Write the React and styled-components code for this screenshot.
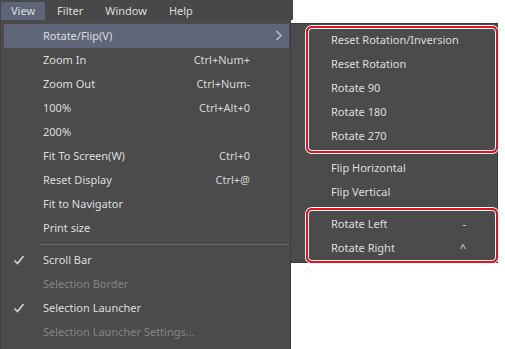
import styled, { createGlobalStyle, css } from "styled-components";

const GlobalStyle = createGlobalStyle`
  html, body {
    margin: 0;
    background: #ffffff;
  }
  body {
    font-family: "Noto Sans", "Open Sans", sans-serif;
    font-size: 11px;
  }
`;

const Screen = styled.div`
  position: relative;
  width: 505px;
  height: 349px;
  overflow: hidden;
  background: #ffffff;
`;

const MenuBar = styled.div`
  display: flex;
  align-items: flex-end;
  width: 293px;
  height: 20px;
  padding-left: 1px;
  box-sizing: border-box;
  background: #484848;
`;

const BarItem = styled.div`
  height: 18px;
  line-height: 18px;
  padding: 0 10px 0 10px;
  margin-right: 2px;
  color: #dcdcdc;
  border-radius: 2px 2px 0 0;
  background: ${(p) => (p.$open ? "#5e6578" : "transparent")};
`;

const Dropdown = styled.div`
  width: 291px;
  height: 329px;
  box-sizing: border-box;
  padding: 4px 1px 0 3px;
  background: #4b4b4b;
  border-left: 1px solid #404040;
  border-right: 1px solid #3c3c3c;
`;

const Row = styled.div`
  display: flex;
  align-items: center;
  box-sizing: border-box;
  height: 24px;
  padding: 0 ${(p) => (p.$sub ? "31px" : "39px")} 2px ${(p) => (p.$sub ? "40px" : "39px")};
  position: relative;
  color: ${(p) => (p.$disabled ? "#858585" : "#dedede")};
  ${(p) =>
    p.$active &&
    css`
      background: #5f6679;
      border-radius: 2px;
    `}
`;

const Label = styled.span`
  flex: 1;
  white-space: nowrap;
`;

const Shortcut = styled.span`
  white-space: nowrap;
  color: #d6d6d6;
`;

const Check = styled.svg`
  position: absolute;
  left: 9px;
  top: 7px;
`;

const Arrow = styled.svg`
  position: absolute;
  right: 6px;
  top: 6px;
`;

const Separator = styled.div`
  height: 8px;
  display: flex;
  align-items: center;
  padding-left: ${(p) => (p.$sub ? "16px" : "36px")};

  &::before {
    content: "";
    flex: 1;
    height: 1px;
    background: #6a6a6a;
  }
`;

const Submenu = styled.div`
  position: absolute;
  left: 290px;
  top: 23px;
  width: 208px;
  box-sizing: border-box;
  padding: 4px 0 2px 0;
  background: #4b4b4b;
  border: 1px solid #3c3c3c;
`;

const Callout = styled.div`
  position: relative;

  &::after {
    content: "";
    position: absolute;
    left: 15px;
    right: -1px;
    top: ${(p) => p.$top}px;
    bottom: ${(p) => p.$bottom}px;
    border: 2px solid #e8101a;
    border-radius: 6px;
    box-shadow: 0 0 0 1px #ffffff, inset 0 0 0 1px #ffffff;
    pointer-events: none;
  }
`;

const mainItems = [
  { label: "Rotate/Flip(V)", active: true, arrow: true },
  { label: "Zoom In", key: "Ctrl+Num+" },
  { label: "Zoom Out", key: "Ctrl+Num-" },
  { label: "100%", key: "Ctrl+Alt+0" },
  { label: "200%" },
  { label: "Fit To Screen(W)", key: "Ctrl+0" },
  { label: "Reset Display", key: "Ctrl+@" },
  { label: "Fit to Navigator" },
  { label: "Print size" },
  { sep: true },
  { label: "Scroll Bar", checked: true },
  { label: "Selection Border", disabled: true },
  { label: "Selection Launcher", checked: true },
  { label: "Selection Launcher Settings...", disabled: true },
];

function CheckMark() {
  return (
    <Check width="12" height="10" viewBox="0 0 12 10">
      <polyline points="1.5,5.5 4.5,8.5 10.5,1" fill="none" stroke="#d4d4d4" strokeWidth="1.6" />
    </Check>
  );
}

function Chevron() {
  return (
    <Arrow width="8" height="11" viewBox="0 0 8 11">
      <polyline points="1.5,1 6,5.5 1.5,10" fill="none" stroke="#c8ccd6" strokeWidth="1.2" />
    </Arrow>
  );
}

function SubRow({ label, shortcut }) {
  return (
    <Row $sub>
      <Label>{label}</Label>
      {shortcut && <Shortcut>{shortcut}</Shortcut>}
    </Row>
  );
}

export default function App() {
  return (
    <Screen>
      <GlobalStyle />
      <MenuBar>
        <BarItem $open>View</BarItem>
        <BarItem>Filter</BarItem>
        <BarItem>Window</BarItem>
        <BarItem>Help</BarItem>
      </MenuBar>
      <Dropdown>
        {mainItems.map((item, i) =>
          item.sep ? (
            <Separator key={i} />
          ) : (
            <Row key={i} $active={item.active} $disabled={item.disabled}>
              {item.checked && <CheckMark />}
              <Label>{item.label}</Label>
              {item.key && <Shortcut>{item.key}</Shortcut>}
              {item.arrow && <Chevron />}
            </Row>
          )
        )}
      </Dropdown>
      <Submenu>
        <Callout $top={-2} $bottom={-5}>
          <SubRow label="Reset Rotation/Inversion" />
          <SubRow label="Reset Rotation" />
          <SubRow label="Rotate 90" />
          <SubRow label="Rotate 180" />
          <SubRow label="Rotate 270" />
        </Callout>
        <Separator $sub />
        <SubRow label="Flip Horizontal" />
        <SubRow label="Flip Vertical" />
        <Separator $sub />
        <Callout $top={-4} $bottom={-3}>
          <SubRow label="Rotate Left" shortcut="-" />
          <SubRow label="Rotate Right" shortcut="^" />
        </Callout>
      </Submenu>
    </Screen>
  );
}
